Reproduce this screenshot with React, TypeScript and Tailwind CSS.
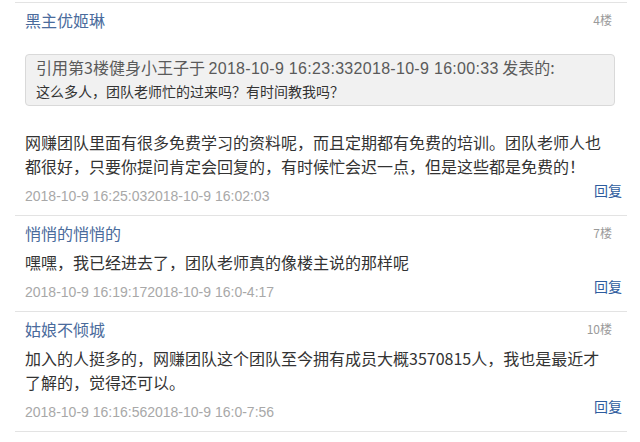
import React from "react";

type Post = {
  name: string;
  floor: string;
  quote?: { who: string; time: string; body: string };
  lines: string;
  date: string;
};

const posts: Post[] = [
  {
    name: "黑主优姬琳",
    floor: "4楼",
    quote: {
      who: "引用第3楼健身小王子于",
      time: "2018-10-9 16:23:332018-10-9 16:00:33",
      body: "这么多人，团队老师忙的过来吗？有时间教我吗？",
    },
    lines:
      "网赚团队里面有很多免费学习的资料呢，而且定期都有免费的培训。团队老师人也都很好，只要你提问肯定会回复的，有时候忙会迟一点，但是这些都是免费的！",
    date: "2018-10-9 16:25:032018-10-9 16:02:03",
  },
  {
    name: "悄悄的悄悄的",
    floor: "7楼",
    lines: "嘿嘿，我已经进去了，团队老师真的像楼主说的那样呢",
    date: "2018-10-9 16:19:172018-10-9 16:0-4:17",
  },
  {
    name: "姑娘不倾城",
    floor: "10楼",
    lines:
      "加入的人挺多的，网赚团队这个团队至今拥有成员大概3570815人，我也是最近才了解的，觉得还可以。",
    date: "2018-10-9 16:16:562018-10-9 16:0-7:56",
  },
];

const cjk = { fontFamily: '"Noto Sans CJK SC", sans-serif' };
const latin = { fontFamily: '"Liberation Sans", sans-serif' };

export default function App() {
  return (
    <div className="w-[640px] h-[442px] bg-white overflow-hidden" style={cjk}>
      <div className="ml-[15px] w-[612px] h-[3px] border-b border-[#e3e3e3]" />
      {posts.map((p) => (
        <div key={p.floor} className="ml-[15px] w-[612px] border-b border-[#e3e3e3] pl-[10px] pr-[5px] pt-[6px] pb-[9px]">
          {/* nombre + piso */}
          <div className="flex justify-between items-center h-[22px]">
            <span className="text-[16px] leading-[22px] text-[#4a6b9c]">{p.name}</span>
            <span className="text-[12px] leading-[16px] text-[#9a9a9a] mr-[10px]">{p.floor}</span>
          </div>

          {p.quote && (
            <div className="mt-[23px] mr-[7px] rounded-[4px] border border-[#d9d9d9] bg-[#f1f1f1] pl-[10px] pt-[1px] pb-[3px]">
              <div className="text-[16px] leading-[22px] text-[#5a5a5a] whitespace-nowrap">
                {p.quote.who}{" "}
                <span className="tracking-[0.3px]" style={latin}>
                  {p.quote.time}
                </span>{" "}
                发表的:
              </div>
              <div className="text-[14px] leading-[22px] text-[#333]">{p.quote.body}</div>
            </div>
          )}

          <div className={`${p.quote ? "mt-[24px]" : "mt-[6px]"} pr-[10px] text-[16px] leading-[24px] text-[#333]`}>
            {p.lines}
          </div>

          <div className="flex justify-between items-start mt-[2px]">
            <span className="mt-[6px] text-[14px] leading-[20px] text-[#a8a8a8]" style={latin}>
              {p.date}
            </span>
            <span className="text-[14px] leading-[20px] text-[#2e5c9e]">回复</span>
          </div>
        </div>
      ))}
    </div>
  );
}
